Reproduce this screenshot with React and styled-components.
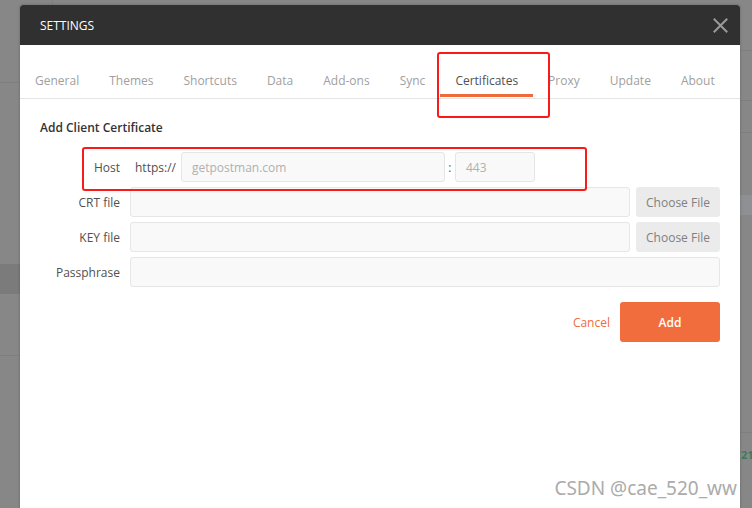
import React from "react";
import styled, { createGlobalStyle } from "styled-components";

const Global = createGlobalStyle`
  html, body { margin: 0; padding: 0; }
  body {
    width: 752px;
    height: 508px;
    overflow: hidden;
    font-family: "Open Sans", "Noto Sans", sans-serif;
    background-color: #878787;
    background-image:
      linear-gradient(#7f7f7f, #7f7f7f),
      linear-gradient(#7f7f7f, #7f7f7f),
      linear-gradient(#7b7b7b, #7b7b7b),
      linear-gradient(#7f7f7f, #7f7f7f),
      linear-gradient(#7f7f7f, #7f7f7f),
      linear-gradient(#7f7f7f, #7f7f7f),
      linear-gradient(#8f9093, #8f9093),
      linear-gradient(#7f7f7f, #7f7f7f),
      linear-gradient(#7f7f7f, #7f7f7f);
    background-size:
      20px 1px,
      20px 1px,
      20px 30px,
      12px 1px,
      12px 1px,
      12px 1px,
      12px 20px,
      12px 1px,
      1px 5px;
    background-position:
      0 82px,
      0 355px,
      0 264px,
      740px 50px,
      740px 100px,
      740px 132px,
      740px 195px,
      740px 432px,
      52px 0;
    background-repeat: no-repeat;
  }
  #root { position: relative; width: 752px; height: 508px; overflow: hidden; }
`;

const Page = styled.div`
  padding: 5px 0 0 20px;
  height: 508px;
  box-sizing: border-box;
  display: flex;
  flex-direction: column;
`;

const Modal = styled.div`
  width: 720px;
  flex: 1;
  background: #ffffff;
  border-radius: 3px 3px 0 0;
  box-shadow: 0 0 3px rgba(0, 0, 0, 0.25);
  display: flex;
  flex-direction: column;
`;

const Header = styled.div`
  height: 40px;
  background: #303030;
  border-radius: 3px 3px 0 0;
  display: flex;
  align-items: center;
  justify-content: space-between;
  padding: 0 12px 0 20px;
  flex-shrink: 0;
`;

const Title = styled.div`
  color: #ffffff;
  font-size: 12px;
`;

const CloseBtn = styled.div`
  width: 16px;
  height: 16px;
  display: flex;
  align-items: center;
  justify-content: center;
`;

const TabBar = styled.div`
  display: flex;
  border-bottom: 1px solid #e4e4e4;
  height: 54px;
  box-sizing: border-box;
  align-items: flex-end;
  flex-shrink: 0;
`;

const Tab = styled.div`
  padding: 0 15px 4px;
  font-size: 12px;
  line-height: 18px;
  white-space: nowrap;
  color: ${(p) => (p.$active ? "#505050" : "#a0a0a0")};
  border-bottom: 3px solid ${(p) => (p.$active ? "#ee6b3b" : "transparent")};
  margin-bottom: 1px;
`;

const Content = styled.div`
  padding: 20px 20px 0;
  display: flex;
  flex-direction: column;
`;

const SectionTitle = styled.div`
  font-size: 12px;
  font-weight: 600;
  color: #333333;
  line-height: 18px;
  margin-bottom: 15px;
`;

const Form = styled.div`
  display: flex;
  flex-direction: column;
  gap: 5px;
`;

const Row = styled.div`
  display: flex;
  align-items: center;
  height: 30px;
`;

const Label = styled.div`
  width: 80px;
  text-align: right;
  font-size: 12px;
  color: #505050;
  margin-right: ${(p) => p.$gap || 10}px;
  flex-shrink: 0;
`;

const Prefix = styled.div`
  font-size: 12px;
  color: #505050;
  margin-right: 5px;
`;

const Input = styled.div`
  height: 30px;
  box-sizing: border-box;
  width: ${(p) => (p.$w ? `${p.$w}px` : "auto")};
  flex: ${(p) => (p.$w ? "none" : "1")};
  background: #f9f9f9;
  border: 1px solid #e6e6e6;
  border-radius: 3px;
  font-size: 12px;
  color: #b0b0b0;
  display: flex;
  align-items: center;
  padding-left: 10px;
`;

const Colon = styled.div`
  font-size: 12px;
  color: #606060;
  width: 10px;
  text-align: center;
`;

const FileBtn = styled.div`
  margin-left: 6px;
  width: 84px;
  height: 30px;
  background: #ebebeb;
  border-radius: 3px;
  font-size: 12px;
  color: #808080;
  display: flex;
  align-items: center;
  justify-content: center;
`;

const Actions = styled.div`
  display: flex;
  justify-content: flex-end;
  align-items: center;
  gap: 10px;
  margin-top: 15px;
`;

const Cancel = styled.div`
  color: #ee6b3b;
  font-size: 12px;
`;

const AddBtn = styled.div`
  width: 100px;
  height: 40px;
  background: #f26d3d;
  border-radius: 3px;
  color: #ffffff;
  font-size: 12px;
  font-weight: 600;
  display: flex;
  align-items: center;
  justify-content: center;
`;

const Annotation = styled.div`
  position: absolute;
  left: ${(p) => p.$x}px;
  top: ${(p) => p.$y}px;
  width: ${(p) => p.$w}px;
  height: ${(p) => p.$h}px;
  border: 2.5px solid #fb1a1a;
  border-radius: 3px;
  box-sizing: border-box;
  pointer-events: none;
`;

const Watermark = styled.div`
  position: absolute;
  right: 15px;
  bottom: 7px;
  font-family: "Noto Sans", "Open Sans", sans-serif;
  font-size: 19px;
  color: #ababab;
  text-shadow: 0 0 1px #ffffff;
  white-space: nowrap;
`;

const GreenNum = styled.div`
  position: absolute;
  left: 741px;
  top: 447px;
  font-size: 11px;
  font-weight: 700;
  color: #3d7a5b;
  font-family: "Open Sans", sans-serif;
`;

const tabs = [
  "General",
  "Themes",
  "Shortcuts",
  "Data",
  "Add-ons",
  "Sync",
  "Certificates",
  "Proxy",
  "Update",
  "About",
];

export default function App() {
  return (
    <>
      <Global />
      <Page>
        <Modal>
          <Header>
            <Title>SETTINGS</Title>
            <CloseBtn>
              <svg width="15" height="15" viewBox="0 0 15 15">
                <path
                  d="M1.5 1.5 L13.5 13.5 M13.5 1.5 L1.5 13.5"
                  stroke="#9a9a9a"
                  strokeWidth="2"
                  strokeLinecap="square"
                />
              </svg>
            </CloseBtn>
          </Header>
          <TabBar>
            {tabs.map((t) => (
              <Tab key={t} $active={t === "Certificates"}>
                {t}
              </Tab>
            ))}
          </TabBar>
          <Content>
            <SectionTitle>Add Client Certificate</SectionTitle>
            <Form>
              <Row>
                <Label $gap={15}>Host</Label>
                <Prefix>https://</Prefix>
                <Input $w={264}>getpostman.com</Input>
                <Colon>:</Colon>
                <Input $w={80}>443</Input>
              </Row>
              <Row>
                <Label>CRT file</Label>
                <Input />
                <FileBtn>Choose File</FileBtn>
              </Row>
              <Row>
                <Label>KEY file</Label>
                <Input />
                <FileBtn>Choose File</FileBtn>
              </Row>
              <Row>
                <Label>Passphrase</Label>
                <Input />
              </Row>
            </Form>
            <Actions>
              <Cancel>Cancel</Cancel>
              <AddBtn>Add</AddBtn>
            </Actions>
          </Content>
        </Modal>
      </Page>
      <Annotation $x={437} $y={52} $w={113} $h={66} />
      <Annotation $x={82} $y={147} $w={505} $h={44} />
      <GreenNum>21</GreenNum>
      <Watermark>CSDN @cae_520_ww</Watermark>
    </>
  );
}
